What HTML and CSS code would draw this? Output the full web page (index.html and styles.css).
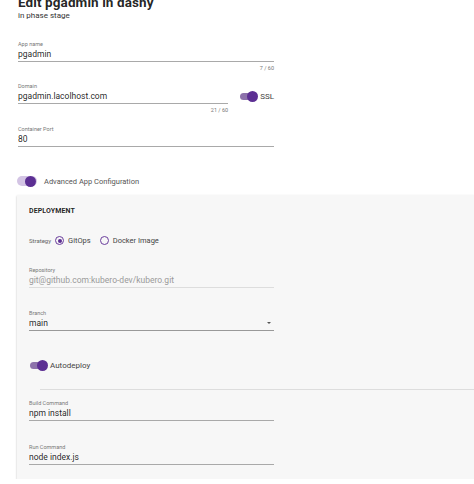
FILE: index.html
```html
<!DOCTYPE html>
<html>
<head>
<meta charset="utf-8">
<link rel="stylesheet" href="styles.css">
</head>
<body>
<div class="page">
  <h1 class="title">Edit pgadmin in dashy</h1>
  <div class="subtitle">in phase stage</div>

  <div class="field f-app">
    <div class="label">App name</div>
    <div class="value">pgadmin</div>
    <div class="counter">7 / 60</div>
  </div>

  <div class="domain-row">
    <div class="field f-domain">
      <div class="label">Domain</div>
      <div class="value">pgadmin.lacolhost.com</div>
      <div class="counter">21 / 60</div>
    </div>
    <div class="switch-wrap ssl">
      <span class="switch dark"><span class="thumb"></span></span>
      <span class="switch-label">SSL</span>
    </div>
  </div>

  <div class="field f-port">
    <div class="label">Container Port</div>
    <div class="value">80</div>
  </div>

  <div class="switch-wrap adv">
    <span class="switch light big"><span class="thumb"></span></span>
    <span class="switch-label adv-label">Advanced App Configuration</span>
  </div>

  <div class="card">
    <div class="card-title">DEPLOYMENT</div>
    <div class="strategy">
      <span class="strategy-label">Strategy</span>
      <span class="radio on"></span><span class="radio-label">GitOps</span>
      <span class="radio"></span><span class="radio-label">Docker Image</span>
    </div>

    <div class="field f-repo">
      <div class="label">Repository</div>
      <div class="value muted">git@github.com:kubero-dev/kubero.git</div>
    </div>

    <div class="field f-branch">
      <div class="label">Branch</div>
      <div class="value select">main<span class="caret"></span></div>
    </div>

    <div class="switch-wrap auto">
      <span class="switch dark"><span class="thumb"></span></span>
      <span class="switch-label">Autodeploy</span>
    </div>

    <div class="divider"></div>

    <div class="field f-build">
      <div class="label">Build Command</div>
      <div class="value">npm install</div>
    </div>

    <div class="field f-run">
      <div class="label">Run Command</div>
      <div class="value">node index.js</div>
    </div>
  </div>
</div>
</body>
</html>
```
FILE: styles.css
```css
html, body {
  margin: 0;
  padding: 0;
  background: #fff;
  overflow: hidden;
}
body {
  font-family: Roboto, "Liberation Sans", sans-serif;
  color: rgba(0,0,0,0.87);
}
.page {
  padding-left: 18px;
  margin-top: -7px;
}
.title {
  margin: 0;
  font-size: 13.5px;
  font-weight: 700;
  line-height: 18px;
  letter-spacing: 0.1px;
}
.subtitle {
  font-size: 8px;
  line-height: 10px;
  margin-top: 0;
  color: #333;
}
.field {
  width: 256px;
}
.label {
  font-size: 5.5px;
  line-height: 8px;
  color: #777;
}
.value {
  font-size: 8.5px;
  line-height: 12px;
  border-bottom: 1px solid #a9a9a9;
  padding-bottom: 1px;
  position: relative;
}
.counter {
  font-size: 5.5px;
  line-height: 8px;
  color: #777;
  text-align: right;
  margin-top: 2px;
}
.f-app { margin-top: 19px; }
.domain-row {
  display: flex;
  align-items: flex-start;
  margin-top: 10px;
  width: 256px;
}
.f-domain { width: 212px; }
.ssl {
  margin-left: 12px;
  margin-top: 10px;
}
.f-port { margin-top: 11px; }
.switch-wrap {
  display: flex;
  align-items: center;
}
.switch {
  position: relative;
  display: inline-block;
  width: 16px;
  height: 7px;
  border-radius: 4px;
  background: #8d72ab;
}
.switch .thumb {
  position: absolute;
  right: -2px;
  top: -2px;
  width: 11px;
  height: 11px;
  border-radius: 50%;
  background: #5c2f93;
}
.switch.light {
  background: #d3c4e4;
}
.switch.big {
  width: 20px;
  height: 10px;
  border-radius: 5px;
}
.switch.big .thumb {
  right: 1px;
  top: -0.5px;
}
.switch-label {
  font-size: 8px;
  margin-left: 4px;
  color: #444;
}
.adv {
  margin-top: 29px;
  margin-left: -1px;
}
.adv-label {
  margin-left: 7px;
  font-size: 7.5px;
  color: #555;
}
.card {
  margin-top: 9px;
  margin-left: -1px;
  background: #f7f7f7;
  padding: 11px 0 16px 12px;
  box-shadow: 0 1px 2px rgba(0,0,0,0.25);
  height: 257px;
}
.card-title {
  font-size: 7px;
  font-weight: 700;
  line-height: 10px;
  letter-spacing: 0.1px;
}
.strategy {
  display: flex;
  align-items: center;
  margin-top: 20px;
  font-size: 7.5px;
  color: #444;
}
.strategy-label {
  font-size: 6px;
  color: #666;
  margin-right: 4px;
}
.radio {
  display: inline-block;
  width: 7px;
  height: 7px;
  border: 1.3px solid #6a3d9c;
  border-radius: 50%;
  position: relative;
}
.radio.on::after {
  content: "";
  position: absolute;
  left: 1.5px;
  top: 1.5px;
  width: 4px;
  height: 4px;
  border-radius: 50%;
  background: #5c2f93;
}
.radio-label {
  margin-left: 4px;
  margin-right: 9px;
}
.card .field { width: 245px; }
.f-repo { margin-top: 21px; }
.muted { color: #9a9a9a; border-bottom-color: #ddd; }
.f-branch { margin-top: 21px; }
.select { border-bottom-color: #999; }
.caret {
  position: absolute;
  right: 3px;
  top: 5px;
  width: 0;
  height: 0;
  border-left: 2.5px solid transparent;
  border-right: 2.5px solid transparent;
  border-top: 2.5px solid #555;
}
.auto {
  margin-top: 30px;
  margin-left: 1px;
}
.divider {
  margin-top: 19px;
  margin-left: 11px;
  border-top: 1px solid #ddd;
}
.f-build { margin-top: 9px; }
.f-run { margin-top: 22px; }
```
